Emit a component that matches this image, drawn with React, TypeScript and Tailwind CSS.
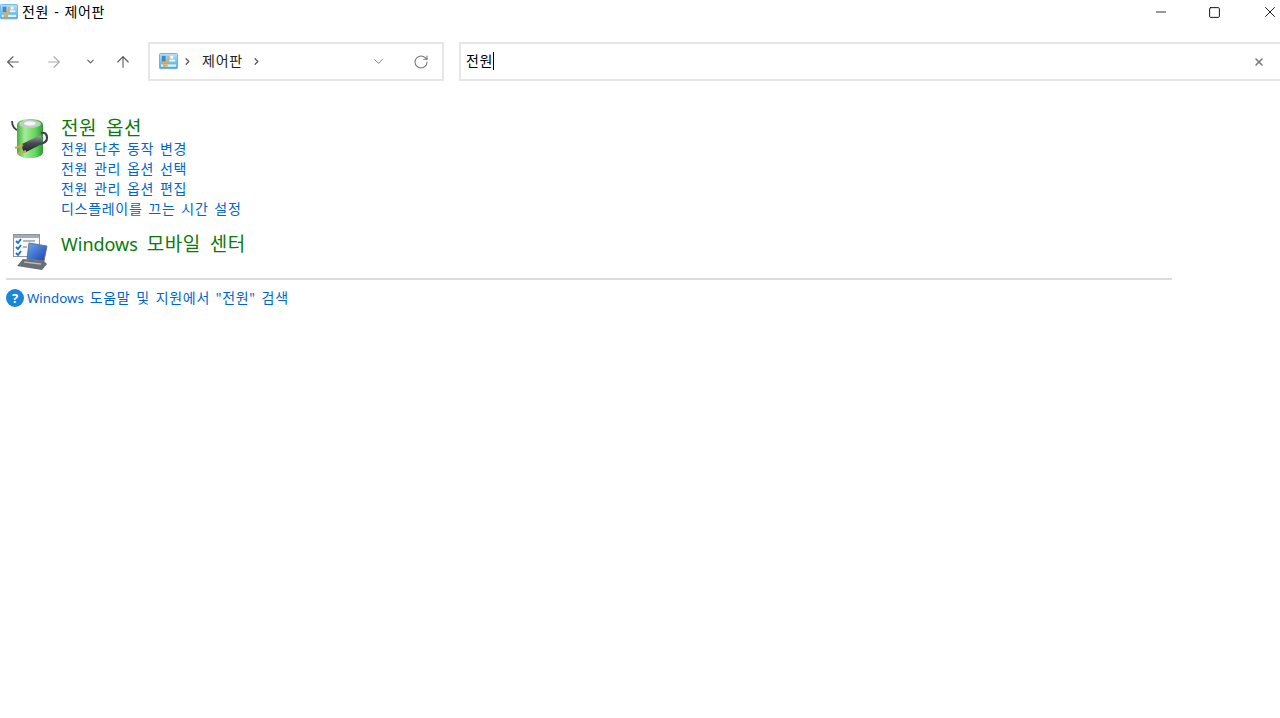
import { ArrowLeft, ArrowRight, ArrowUp, ChevronDown, ChevronRight, RotateCw, X, Minus, Square } from 'lucide-react';

const FONT = 'font-["Noto_Sans","Noto_Sans_CJK_KR",sans-serif]';

// ── Icons ─────────────────────────────────────────────────────────────────────

function ControlPanelIcon({ id, size = 18 }: { id: string; size?: number }) {
  return (
    <svg width={size} height={size * 0.85} viewBox="0 0 20 17">
      <defs>
        <linearGradient id={id} x1="0" y1="0" x2="0" y2="1">
          <stop offset="0" stopColor="#b5e2f9" />
          <stop offset="1" stopColor="#45a8e6" />
        </linearGradient>
      </defs>
      <rect x="0.5" y="0.5" width="19" height="16" rx="1" fill={`url(#${id})`} stroke="#63b2e4" />
      <rect x="3" y="3" width="4" height="6" fill="#3f86cf" />
      <path d="M3 10h5c1 0 1.500-1 1.500-2V3" stroke="#f2a73a" strokeWidth="1.5" fill="none" />
      <rect x="12" y="3" width="3" height="3" fill="#ffffff" />
      <rect x="11" y="7" width="6" height="2" fill="#eaf6fc" />
      <rect x="2" y="12" width="16" height="2.500" fill="#dff1fb" />
      <rect x="4" y="12" width="5" height="2.500" fill="#eba944" />
    </svg>
  );
}

function PowerIcon() {
  return (
    <svg width="40" height="41" viewBox="0 0 40 41">
      <defs>
        <linearGradient id="batt" x1="0" y1="0" x2="1" y2="0">
          <stop offset="0" stopColor="#3fb03c" />
          <stop offset="0.3" stopColor="#a4ec98" />
          <stop offset="0.7" stopColor="#66d65e" />
          <stop offset="1" stopColor="#2f9a34" />
        </linearGradient>
        <linearGradient id="plug" x1="0" y1="0" x2="0" y2="1">
          <stop offset="0" stopColor="#9aa0a6" />
          <stop offset="0.45" stopColor="#474d52" />
          <stop offset="1" stopColor="#1f2428" />
        </linearGradient>
      </defs>
      <path d="M3 3c0 5 2 8 7 10" stroke="#3b4150" strokeWidth="1.8" fill="none" />
      <path d="M8 7c0-4 6-6 13-6s13 2 13 6v27c0 4-6 6-13 6s-13-2-13-6z" fill="url(#batt)" />
      <ellipse cx="21" cy="6" rx="11" ry="4" fill="#c3cdc6" />
      <ellipse cx="21" cy="5.500" rx="6" ry="2.200" fill="#f4f7f5" />
      <path d="M32 15c4-1 6 1 6 5 0 3-2 5-7 6" stroke="#3b4150" strokeWidth="2.200" fill="none" />
      <path d="M13 26l16-8c2-1 4 0 4 3 0 4-1 6-4 7l-12 6c-2 1-4-1-4-8z" fill="url(#plug)" />
      <path d="M14 27l-8 3" stroke="#d3a452" strokeWidth="2.400" />
      <path d="M17 33l-8 3" stroke="#d3a452" strokeWidth="2.400" />
    </svg>
  );
}

function MobilityIcon() {
  return (
    <svg width="40" height="40" viewBox="0 0 40 40">
      <defs>
        <linearGradient id="scr" x1="0" y1="0" x2="1" y2="1">
          <stop offset="0" stopColor="#6aaaf0" />
          <stop offset="1" stopColor="#1c3fb0" />
        </linearGradient>
      </defs>
      <rect x="4.500" y="3.500" width="26" height="22" fill="#f8f9fb" stroke="#8c929a" />
      <rect x="5" y="4" width="25" height="3" fill="#a4abb3" />
      <path d="M7 10l2 2 3-4M7 16l2 2 3-4M7 22l2 2 3-4" stroke="#1d6fc4" strokeWidth="1.800" fill="none" />
      <path d="M14 10h12M14 16h4" stroke="#9aa2ab" strokeWidth="1.400" />
      <path d="M20 12l18 3-3 15-17-2z" fill="url(#scr)" stroke="#6b7480" />
      <path d="M14 28l21 2 3 3-5 6-25-4z" fill="#6a6f76" />
      <path d="M15 31l17 2" stroke="#b4b9c0" strokeWidth="1.600" />
    </svg>
  );
}

// ── Pieces ────────────────────────────────────────────────────────────────────

function TitleBar() {
  return (
    <div className="flex h-[24px] items-center">
      <ControlPanelIcon id="cp-title" />
      <span className="ml-[4px] text-[14px] leading-none tracking-[0.6px] text-black [word-spacing:1px]">전원 - 제어판</span>
      <div className="ml-auto flex items-center text-black">
        <Minus size={16} strokeWidth={1.2} className="mr-[39px]" />
        <Square size={13} strokeWidth={1.7} className="mr-[40px]" />
        <X size={18} strokeWidth={1.2} className="mr-[1px]" />
      </div>
    </div>
  );
}

function NavBar() {
  return (
    <div className="mt-[18px] flex h-[39px] items-center">
      <div className="flex w-[148px] shrink-0 items-center text-[#5c5c5c]">
        <ArrowLeft size={18} strokeWidth={1.5} className="ml-[4px]" />
        <ArrowRight size={18} strokeWidth={1.5} className="ml-[23px] text-[#aaa]" />
        <ChevronDown size={11} strokeWidth={2.4} className="ml-[22px]" />
        <ArrowUp size={18} strokeWidth={1.5} className="ml-[18px]" />
      </div>
      <div className="flex h-full w-[296px] shrink-0 items-center border-2 border-[#e6e6e6] pl-[9px]">
        <ControlPanelIcon id="cp-addr" size={19} />
        <ChevronRight size={11} strokeWidth={2.6} className="ml-[4px] text-[#555]" />
        <span className="ml-[9px] pb-[2px] text-[14px] tracking-[0.8px] text-[#222]">제어판</span>
        <ChevronRight size={11} strokeWidth={2.6} className="ml-[8px] text-[#555]" />
        <ChevronDown size={15} strokeWidth={1.5} className="ml-auto text-[#777]" />
        <RotateCw size={16} strokeWidth={1.6} className="ml-[27px] mr-[13px] text-[#777]" />
      </div>
      <div className="ml-[15px] flex h-full flex-1 items-center border-y-2 border-l-2 border-[#e6e6e6] pl-[5px]">
        <span className="mb-[2px] border-r border-black text-[14px] leading-[18px] tracking-[0.5px] text-black">전원</span>
        <X size={12} strokeWidth={3} className="ml-auto mr-[15px] text-[#777]" />
      </div>
    </div>
  );
}

function Result({ icon, title, links, className, titleClass }: { icon: React.ReactNode; title: React.ReactNode; links: string[]; className: string; titleClass: string }) {
  return (
    <div className={`flex ${className}`}>
      <div className="ml-[9px] w-[52px] shrink-0">{icon}</div>
      <div>
        <div className={`text-[19px] leading-[21px] tracking-[0.5px] text-[#0a7a0a] [word-spacing:3.5px] ${titleClass}`}>{title}</div>
        <div className="flex flex-col">
          {links.map(l => (
            <a key={l} className="text-[14px] leading-[20px] tracking-[0.7px] text-[#0066cc] [word-spacing:1.5px]">{l}</a>
          ))}
        </div>
      </div>
    </div>
  );
}

// ── Main Screen ───────────────────────────────────────────────────────────────

export default function App() {
  return (
    <div className={`h-[718px] w-[1280px] overflow-hidden bg-white ${FONT}`}>
      <TitleBar />
      <NavBar />
      <div className="mt-[37px]">
        <Result
          icon={<PowerIcon />}
          title="전원 옵션"
          className=""
          titleClass=""
          links={['전원 단추 동작 변경', '전원 관리 옵션 선택', '전원 관리 옵션 편집', '디스플레이를 끄는 시간 설정']}
        />
        <Result
          icon={<MobilityIcon />}
          title={<><span className="text-[18px] tracking-normal">Windows</span> 모바일 센터</>}
          className="mt-[12px]"
          titleClass="pt-[3px]"
          links={[]}
        />
        <div className="ml-[6px] mt-[7px] h-[2px] w-[1166px] bg-[#dcdcdc]" />
        <div className="ml-[6px] mt-[8px] flex items-center">
          <span className="flex h-[18px] w-[18px] items-center justify-center rounded-full bg-[#1a86d8] text-[13px] font-bold leading-none text-white">?</span>
          <a className="ml-[3px] text-[14px] leading-[20px] tracking-[0.7px] text-[#0066cc] [word-spacing:1.5px]">
            <span className="text-[13.3px] tracking-normal">Windows</span> 도움말 및 지원에서 "전원" 검색
          </a>
        </div>
      </div>
    </div>
  );
}
